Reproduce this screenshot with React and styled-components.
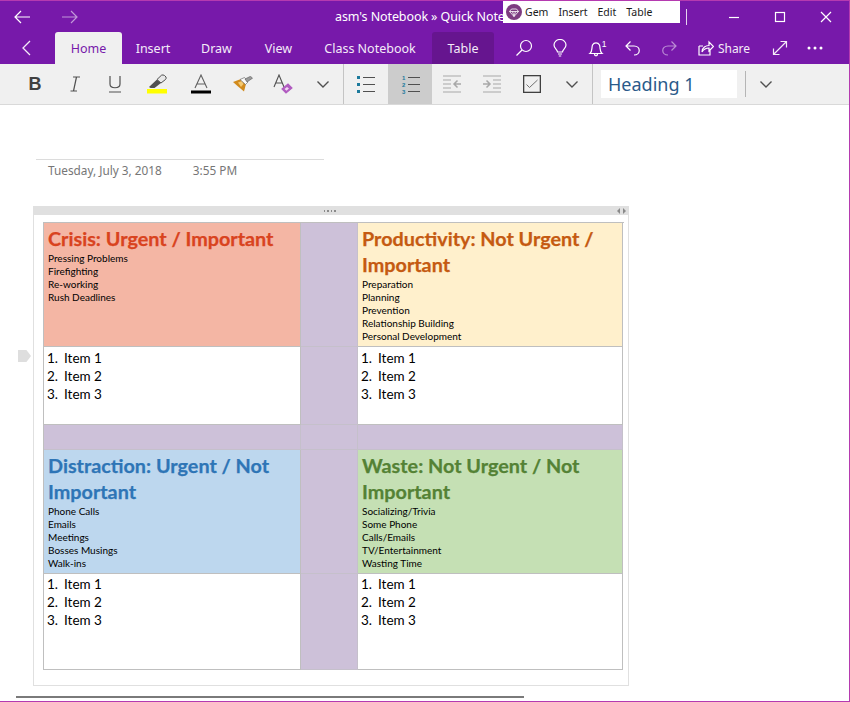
import React from 'react';
import styled, { createGlobalStyle } from 'styled-components';

const Global = createGlobalStyle`
  html, body { margin: 0; padding: 0; background: #fff; overflow: hidden; }
  body { font-family: "Noto Sans", "Open Sans", sans-serif; }
`;

const Window = styled.div`
  position: relative;
  width: 850px;
  height: 702px;
  box-sizing: border-box;
  border: 1px solid #b53ab0;
  border-width: 1px 1px 1px 0;
  overflow: hidden;
  display: flex;
  flex-direction: column;
`;
const TitleBar = styled.div`
  height: 31px;
  background: #7719aa;
  display: flex;
  align-items: center;
  color: #fff;
  flex: none;
`;
const NavGroup = styled.div`
  width: 335px;
  display: flex;
  flex: none;
`;
const NavButton = styled.div`
  width: 48px;
  display: flex;
  justify-content: center;
  opacity: ${p => (p.$dim ? 0.55 : 1)};
  margin-left: ${p => (p.$first ? '-2px' : '0')};
`;
const Title = styled.div`
  font-size: 12.5px;
  letter-spacing: -0.1px;
  white-space: nowrap;
  width: 351px;
  flex: none;
  overflow: hidden;
`;
const TitleDivider = styled.div`
  width: 1px;
  height: 16px;
  background: #e6d4ef;
  flex: none;
`;
const WinButtons = styled.div`
  display: flex;
  margin-left: 24px;
`;
const WinButton = styled.div`
  width: 46px;
  display: flex;
  justify-content: center;
`;
const GemMenu = styled.div`
  position: absolute;
  left: 503px;
  top: 0;
  width: 177px;
  height: 22px;
  background: #fff;
  display: flex;
  align-items: center;
  font-size: 10.5px;
  color: #1a1a1a;
  box-sizing: border-box;
  padding-left: 3px;
`;
const GemLogo = styled.div`
  width: 16px;
  height: 16px;
  border-radius: 50%;
  background: #7d3c80;
  display: flex;
  align-items: center;
  justify-content: center;
  margin-right: 3px;
`;
const GemItem = styled.span`
  margin-right: ${p => p.$gap}px;
`;
const TabBar = styled.div`
  height: 32px;
  background: #7719aa;
  display: flex;
  align-items: stretch;
  flex: none;
`;
const BackSlot = styled.div`
  width: 55px;
  box-sizing: border-box;
  padding-left: 20px;
  display: flex;
  align-items: center;
`;
const Tab = styled.div`
  width: ${p => p.$w}px;
  display: flex;
  align-items: center;
  justify-content: center;
  font-size: 12.5px;
  white-space: nowrap;
  border-radius: 3px 3px 0 0;
  color: ${p => (p.$active ? '#7719aa' : '#f4ebf8')};
  background: ${p => (p.$active ? '#f0f0f0' : p.$dark ? '#66158f' : 'transparent')};
`;
const Actions = styled.div`
  display: flex;
  align-items: center;
  margin-left: 12px;
`;
const ActionButton = styled.div`
  width: ${p => p.$w}px;
  display: flex;
  align-items: center;
  justify-content: center;
  color: #f4ebf8;
  font-size: 12px;
  gap: 4px;
  opacity: ${p => (p.$dim ? 0.5 : 1)};
`;
const Toolbar = styled.div`
  height: 40px;
  background: #f0f0f0;
  border-bottom: 1px solid #d9d9d9;
  display: flex;
  align-items: stretch;
  padding-left: 15px;
  flex: none;
`;
const ToolButton = styled.div`
  width: ${p => p.$w || 40}px;
  display: flex;
  align-items: center;
  justify-content: center;
  background: ${p => (p.$active ? '#cccccc' : 'transparent')};
  color: #404040;
  font-family: "Liberation Sans", sans-serif;
`;
const BoldMark = styled.span`
  font-weight: 700;
  font-size: 18px;
`;
const ToolGroupEnd = styled.div`
  width: 1px;
  background: #c4c4c4;
  flex: none;
`;
const StyleBox = styled.div`
  width: 136px;
  height: 28px;
  margin: 6px 0 6px 8px;
  background: #fff;
  box-sizing: border-box;
  padding-left: 7px;
  display: flex;
  align-items: center;
  font-size: 18px;
  color: #2a5a8a;
`;
const StyleDivider = styled.div`
  width: 1px;
  height: 26px;
  margin: 7px 0 0 8px;
  background: #b5b5b5;
`;
const Canvas = styled.div`
  flex: 1;
  background: #fff;
  padding: 54px 0 0 33px;
  min-height: 0;
`;
const DateBlock = styled.div`
  margin-left: 3px;
  width: 288px;
  border-top: 1px solid #dcdcdc;
  padding: 2px 0 0 12px;
  display: flex;
  height: 47px;
  box-sizing: border-box;
  font-size: 11.8px;
  color: #767676;
  gap: 31px;
  line-height: 16px;
`;
const NoteBox = styled.div`
  width: 596px;
  height: 480px;
  box-sizing: border-box;
  border: 1px solid #e0e0e0;
  border-top: none;
`;
const NoteHandle = styled.div`
  height: 9px;
  background: #e0e0e0;
  margin-right: -1px;
  margin-left: -1px;
  display: flex;
  align-items: center;
  justify-content: flex-end;
  position: relative;
`;
const Dots = styled.div`
  position: absolute;
  left: 291px;
  top: 4px;
  width: 13px;
  height: 2px;
  background: repeating-linear-gradient(90deg, #8a8a8a 0 1.5px, transparent 1.5px 3.5px);
`;
const Arrows = styled.div`
  display: flex;
  gap: 3px;
  margin-right: 3px;
`;
const Arrow = styled.div`
  width: 0;
  height: 0;
  border-top: 3px solid transparent;
  border-bottom: 3px solid transparent;
  ${p => (p.$dir === 'l' ? 'border-right: 3px solid #8a8a8a;' : 'border-left: 3px solid #8a8a8a;')}
`;
const Matrix = styled.div`
  margin: 7px 0 0 9px;
  width: 580px;
  display: grid;
  grid-template-columns: 257px 57px 265px;
  grid-template-rows: 124px 78px 25px 124px 96px;
  border-top: 1px solid #bfbfbf;
  border-left: 1px solid #bfbfbf;
`;
const Cell = styled.div`
  box-sizing: border-box;
  background: ${p => p.$bg || '#fff'};
  border-right: 1px solid ${p => p.$line || '#bfbfbf'};
  border-bottom: 1px solid ${p => p.$line || '#bfbfbf'};
`;
const Quadrant = styled(Cell)`
  padding: 2px 4px 0 4px;
  font-family: Lato, "Noto Sans", sans-serif;
`;
const QuadTitle = styled.div`
  color: ${p => p.$color};
  font-size: 19.8px;
  font-weight: 700;
  line-height: 26px;
  margin-bottom: 1px;
  -webkit-text-stroke: 0.25px ${p => p.$color};
`;
const QuadLine = styled.div`
  color: #000;
  font-size: 10px;
  line-height: 13px;
  white-space: nowrap;
`;
const ItemsCell = styled(Cell)`
  padding: ${p => p.$top}px 0 0 3px;
  font-family: Lato, "Noto Sans", sans-serif;
`;
const ItemRow = styled.div`
  display: flex;
  font-size: 13.5px;
  line-height: 18px;
  color: #000;
`;
const ItemNum = styled.span`
  width: 17px;
`;
const Tag = styled.div`
  position: absolute;
  left: 18px;
  top: 349px;
  width: 13px;
  height: 12px;
  background: #dedede;
  clip-path: polygon(0 0, 65% 0, 100% 50%, 65% 100%, 0 100%);
`;
const ScrollThumb = styled.div`
  position: absolute;
  left: 16px;
  top: 695px;
  width: 508px;
  height: 2px;
  background: #7a7a7a;
`;

const Ico = ({ w = 20, h = 20, children, stroke = 'currentColor', sw = 1.2 }) => (
  <svg width={w} height={h} viewBox={`0 0 ${w} ${h}`} fill="none" stroke={stroke} strokeWidth={sw}>{children}</svg>
);

const Chevron = () => (
  <Ico w={14} h={10} stroke="#505050" sw={1.4}><path d="M1.5 2.5 L7 8 L12.5 2.5" /></Ico>
);

const Items = ({ top }) => (
  <ItemsCell $top={top}>
    {[1, 2, 3].map(n => (
      <ItemRow key={n}><ItemNum>{n}.</ItemNum>Item {n}</ItemRow>
    ))}
  </ItemsCell>
);

const quads = [
  {
    bg: '#f4b6a4', color: '#d9431e', title: 'Crisis: Urgent / Important',
    lines: ['Pressing Problems', 'Firefighting', 'Re-working', 'Rush Deadlines'],
  },
  {
    bg: '#fff0cc', color: '#c55a11', title: 'Productivity: Not Urgent / Important',
    lines: ['Preparation', 'Planning', 'Prevention', 'Relationship Building', 'Personal Development'],
  },
  {
    bg: '#bdd7ee', color: '#2e75b6', title: 'Distraction: Urgent / Not Important',
    lines: ['Phone Calls', 'Emails', 'Meetings', 'Bosses Musings', 'Walk-ins'],
  },
  {
    bg: '#c5e0b4', color: '#548235', title: 'Waste: Not Urgent / Not Important',
    lines: ['Socializing/Trivia', 'Some Phone', 'Calls/Emails', 'TV/Entertainment', 'Wasting Time'],
  },
];

const PURPLE = '#cdc1d9';
const PURPLE_LINE = '#c5c0cb';

const Quad = ({ q }) => (
  <Quadrant $bg={q.bg}>
    <QuadTitle $color={q.color}>{q.title}</QuadTitle>
    {q.lines.map(l => <QuadLine key={l}>{l}</QuadLine>)}
  </Quadrant>
);

const Spacer = () => <Cell $bg={PURPLE} $line={PURPLE_LINE} />;

const TEAL = '#1c7a9c';

export default function App() {
  return (
    <Window>
      <Global />
      <TitleBar>
        <NavGroup>
          <NavButton $first>
            <Ico w={18} h={16} stroke="#fff"><path d="M17 8 H2 M8 2 L2 8 L8 14" /></Ico>
          </NavButton>
          <NavButton $dim>
            <Ico w={18} h={16} stroke="#fff"><path d="M1 8 H16 M10 2 L16 8 L10 14" /></Ico>
          </NavButton>
        </NavGroup>
        <Title>asm's Notebook » Quick Notes</Title>
        <TitleDivider />
        <WinButtons>
          <WinButton><Ico w={12} h={12} stroke="#fff"><path d="M1 6.5 H11" /></Ico></WinButton>
          <WinButton><Ico w={12} h={12} stroke="#fff"><rect x="1.5" y="1.5" width="9" height="9" /></Ico></WinButton>
          <WinButton><Ico w={12} h={12} stroke="#fff"><path d="M1 1 L11 11 M11 1 L1 11" /></Ico></WinButton>
        </WinButtons>
      </TitleBar>
      <GemMenu>
        <GemLogo>
          <Ico w={10} h={9} stroke="#fff" sw={0.8}><path d="M2.5 1 H7.5 L9.5 3.5 L5 8.5 L0.5 3.5 Z M0.5 3.5 H9.5 M3.5 3.5 L5 8.5 L6.5 3.5" /></Ico>
        </GemLogo>
        <GemItem $gap={10}>Gem</GemItem>
        <GemItem $gap={10}>Insert</GemItem>
        <GemItem $gap={10}>Edit</GemItem>
        <GemItem $gap={0}>Table</GemItem>
      </GemMenu>
      <TabBar>
        <BackSlot>
          <Ico w={12} h={16} stroke="#f4ebf8" sw={1.3}><path d="M10 1 L3 8 L10 15" /></Ico>
        </BackSlot>
        <Tab $w={67} $active>Home</Tab>
        <Tab $w={62}>Insert</Tab>
        <Tab $w={65}>Draw</Tab>
        <Tab $w={59}>View</Tab>
        <Tab $w={124}>Class Notebook</Tab>
        <Tab $w={62} $dark>Table</Tab>
        <Actions>
          <ActionButton $w={36}>
            <Ico w={18} h={18} stroke="#fff"><circle cx="11" cy="7" r="5.5" /><path d="M7 11 L1.5 16.5" /></Ico>
          </ActionButton>
          <ActionButton $w={36}>
            <Ico w={16} h={18} stroke="#fff"><path d="M5.5 13 C5.5 10.5 2 9.5 2 6 A6 5.5 0 0 1 14 6 C14 9.5 10.5 10.5 10.5 13 Z M6 15 H10 M6.8 17 H9.2" /></Ico>
          </ActionButton>
          <ActionButton $w={37}>
            <Ico w={20} h={20} stroke="#fff">
              <path d="M3 15.5 C5.5 13.5 4.5 10 5.5 7 A4 4 0 0 1 12.5 7 C13.5 10 12.5 13.5 15 15.5 Z M7.5 15.5 C7.5 18.5 10.5 18.5 10.5 15.5" />
              <text x="14.8" y="8.5" fontSize="8.5" fill="#fff" stroke="none" fontFamily="Liberation Sans, sans-serif">1</text>
            </Ico>
          </ActionButton>
          <ActionButton $w={36}>
            <Ico w={16} h={16} stroke="#fff"><path d="M5.5 1.5 L1 6 L5.5 10.5 M1 6 H9 C16 6 16 15 9 15" /></Ico>
          </ActionButton>
          <ActionButton $w={36} $dim>
            <Ico w={16} h={16} stroke="#fff"><path d="M10.5 1.5 L15 6 L10.5 10.5 M15 6 H7 C0 6 0 15 7 15" /></Ico>
          </ActionButton>
          <ActionButton $w={74}>
            <Ico w={16} h={16} stroke="#fff"><path d="M1 6 V15 H12 V10 M1 6 H5 M4 12 C4 7.5 8 5.5 11 5.5 V2 L15.5 6.5 L11 11 V8 C8 8 5.5 9.5 4 12" /></Ico>
            Share
          </ActionButton>
          <ActionButton $w={38}>
            <Ico w={16} h={16} stroke="#f4ebf8"><path d="M2 14 L14 2 M8.5 1.5 H14.5 V7.5 M1.5 8.5 V14.5 H7.5" /></Ico>
          </ActionButton>
          <ActionButton $w={32}>
            <Ico w={16} h={4} stroke="none"><circle cx="2" cy="2" r="1.5" fill="#fff" /><circle cx="8" cy="2" r="1.5" fill="#fff" /><circle cx="14" cy="2" r="1.5" fill="#fff" /></Ico>
          </ActionButton>
        </Actions>
      </TabBar>
      <Toolbar>
        <ToolButton><BoldMark>B</BoldMark></ToolButton>
        <ToolButton><Ico w={12} h={16} stroke="#505050" sw={1.2}><path d="M4 1 H11 M1.5 15 H8 M7.5 1 L4.5 15" /></Ico></ToolButton>
        <ToolButton>
          <Ico w={14} h={20} stroke="#505050" sw={1.2}><path d="M2 2 V10 C2 15 12 15 12 10 V2 M1 18 H13" /></Ico>
        </ToolButton>
        <ToolButton $w={44}>
          <Ico w={20} h={20} stroke="none">
            <path d="M2 13 L10 5.5 L14 9 L7.5 14 H3.5 Z" fill="#505050" />
            <path d="M10 5.5 L14.5 1.2 Q16 0.5 17.5 1.5 L19 3 Q19.5 4.5 18.5 5.5 L14 9 Z" fill="#e8e8e8" stroke="#505050" strokeWidth="1" />
            <rect x="0" y="15" width="20" height="4.5" fill="#ffff00" />
          </Ico>
        </ToolButton>
        <ToolButton $w={44}>
          <Ico w={20} h={20} stroke="#606060" sw={1.1}>
            <path d="M4 14 L10 1 L16 14 M6 10 H14" />
            <rect x="0" y="16.5" width="20" height="3" fill="#000" stroke="none" />
          </Ico>
        </ToolButton>
        <ToolButton>
          <Ico w={20} h={16} stroke="none">
            <path d="M0 6 L8 3 L13 8 L11 15.5 L4.5 10 Z" fill="#d18a1c" />
            <path d="M5 6.5 L9 5 L10.5 8 L8 11 Z" fill="#f4c870" />
            <path d="M7 3.5 L11.5 1.5 L15 6 L12.5 8.5 Z" fill="#fafafa" stroke="#707070" strokeWidth="0.7" />
            <path d="M12 3 L17.5 0.3 L19.5 2.2 L14 6 Z" fill="#9a9a9a" stroke="#5a5a5a" strokeWidth="0.6" />
          </Ico>
        </ToolButton>
        <ToolButton>
          <Ico w={20} h={20} stroke="#505050" sw={1.1}>
            <path d="M1 13 L6 1 L11 13 M3 9 H9" />
            <path d="M9 15 L15 10 L19 14 L13 19 Z" fill="#b15cc0" stroke="#b15cc0" />
            <path d="M11.5 15 L14 13 L16 14.5 L13.5 16.8 Z" fill="#f0d8f4" stroke="none" />
          </Ico>
        </ToolButton>
        <ToolButton><Chevron /></ToolButton>
        <ToolGroupEnd />
        <ToolButton $w={44}>
          <Ico w={18} h={17} stroke="#505050" sw={1}>
            <path d="M6 1.5 H18 M6 8.5 H18 M6 15.5 H18" />
            <rect x="0" y="0" width="3" height="3" fill={TEAL} stroke="none" />
            <rect x="0" y="7" width="3" height="3" fill={TEAL} stroke="none" />
            <rect x="0" y="14" width="3" height="3" fill={TEAL} stroke="none" />
          </Ico>
        </ToolButton>
        <ToolButton $w={44} $active>
          <Ico w={19} h={22} stroke="#505050" sw={1}>
            <path d="M7 4.5 H19 M7 11.5 H19 M7 18.5 H19" />
            <g fill={TEAL} stroke="none" fontSize="6" fontWeight="700" fontFamily="Liberation Sans, sans-serif">
              <text x="1" y="6.5">1</text>
              <text x="1" y="13.5">2</text>
              <text x="1" y="20.5">3</text>
            </g>
          </Ico>
        </ToolButton>
        <ToolButton>
          <Ico w={18} h={18} stroke="#a8a8a8" sw={1.1}>
            <path d="M0 1 H18 M0 5 H8 M0 9 H8 M0 13 H8 M0 17 H18" />
            <path d="M18 9 H11 M14.5 5.5 L11 9 L14.5 12.5" strokeWidth="1.5" />
          </Ico>
        </ToolButton>
        <ToolButton>
          <Ico w={18} h={18} stroke="#a8a8a8" sw={1.1}>
            <path d="M0 1 H18 M10 5 H18 M10 9 H18 M10 13 H18 M0 17 H18" />
            <path d="M0 9 H7 M3.5 5.5 L7 9 L3.5 12.5" strokeWidth="1.5" />
          </Ico>
        </ToolButton>
        <ToolButton>
          <Ico w={18} h={18} stroke="#404040" sw={1.3}>
            <rect x="0.65" y="0.65" width="16.7" height="16.7" />
            <path d="M3.5 9.5 L6.5 12.5 L14.5 5" stroke="#707070" strokeWidth="1" />
          </Ico>
        </ToolButton>
        <ToolButton><Chevron /></ToolButton>
        <ToolGroupEnd />
        <StyleBox>Heading 1</StyleBox>
        <StyleDivider />
        <ToolButton><Chevron /></ToolButton>
      </Toolbar>
      <Canvas>
        <DateBlock>
          <span>Tuesday, July 3, 2018</span>
          <span>3:55 PM</span>
        </DateBlock>
        <NoteBox>
          <NoteHandle>
            <Dots />
            <Arrows><Arrow $dir="l" /><Arrow $dir="r" /></Arrows>
          </NoteHandle>
          <Matrix>
            <Quad q={quads[0]} />
            <Spacer />
            <Quad q={quads[1]} />
            <Items top={2} />
            <Spacer />
            <Items top={2} />
            <Spacer />
            <Spacer />
            <Spacer />
            <Quad q={quads[2]} />
            <Spacer />
            <Quad q={quads[3]} />
            <Items top={1} />
            <Spacer />
            <Items top={1} />
          </Matrix>
        </NoteBox>
      </Canvas>
      <Tag />
      <ScrollThumb />
    </Window>
  );
}
